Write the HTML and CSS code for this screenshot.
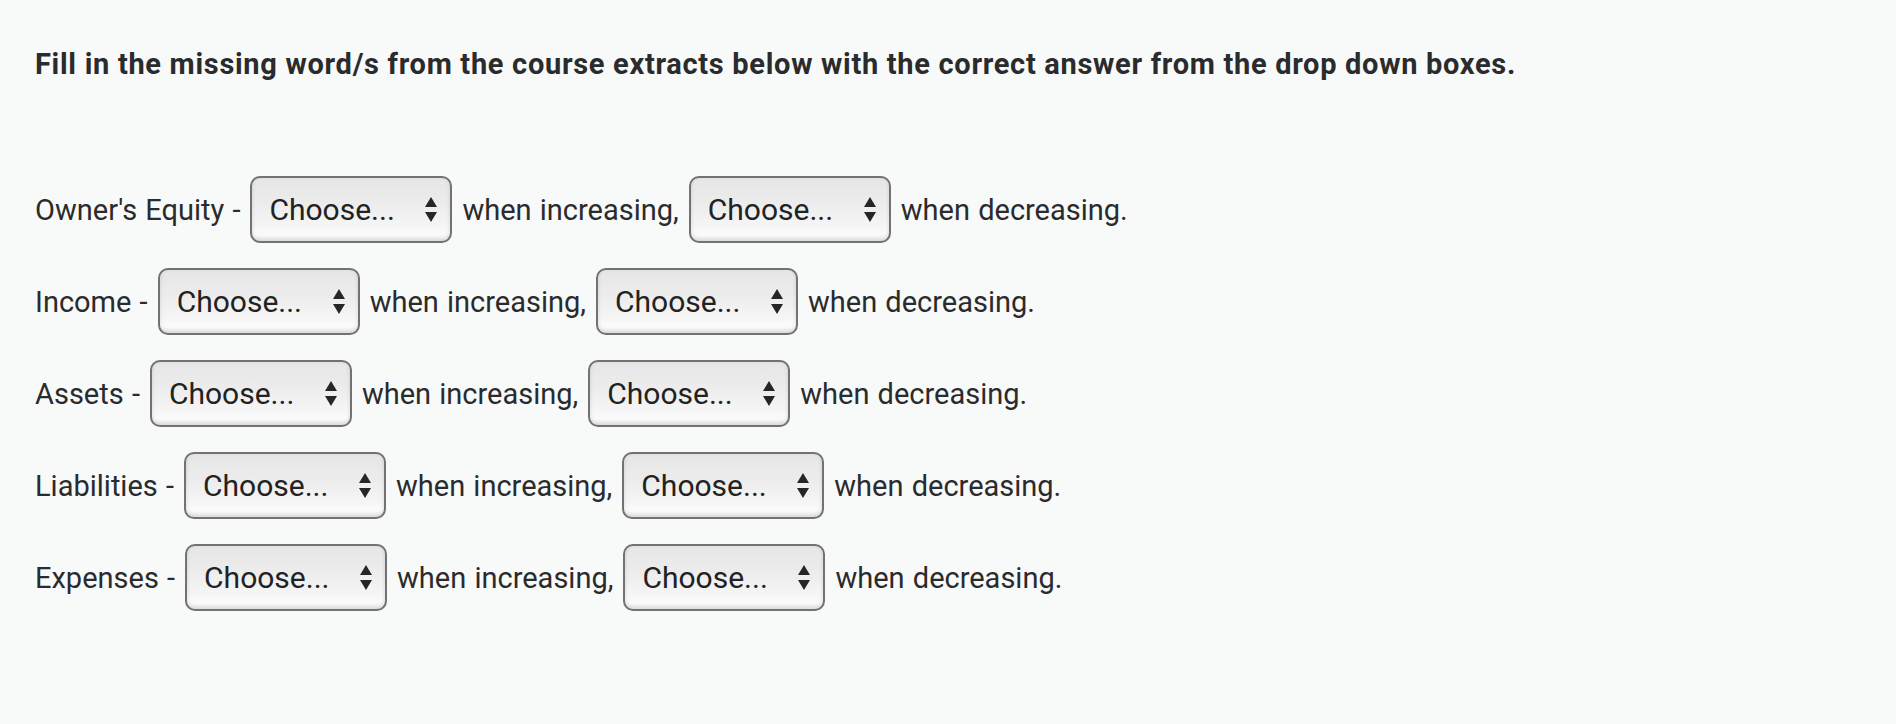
FILE: index.html
```html
<!DOCTYPE html>
<html lang="en">
<head>
<meta charset="utf-8">
<title>Fill in the missing words</title>
<link rel="stylesheet" href="styles.css">
</head>
<body>
<main class="question">
  <p class="prompt">Fill in the missing word/s from the course extracts below with the correct answer from the drop down boxes.</p>
  <div class="rows">
    <div class="row">
      <span class="label">Owner's Equity -</span>
      <div class="select"><span>Choose...</span><svg class="arrows" viewBox="0 0 12 25"><path d="M6 0 L12 10 H0 Z M6 25 L12 15 H0 Z"/></svg></div>
      <span class="label">when increasing,</span>
      <div class="select"><span>Choose...</span><svg class="arrows" viewBox="0 0 12 25"><path d="M6 0 L12 10 H0 Z M6 25 L12 15 H0 Z"/></svg></div>
      <span class="label">when decreasing.</span>
    </div>
    <div class="row">
      <span class="label">Income -</span>
      <div class="select"><span>Choose...</span><svg class="arrows" viewBox="0 0 12 25"><path d="M6 0 L12 10 H0 Z M6 25 L12 15 H0 Z"/></svg></div>
      <span class="label">when increasing,</span>
      <div class="select"><span>Choose...</span><svg class="arrows" viewBox="0 0 12 25"><path d="M6 0 L12 10 H0 Z M6 25 L12 15 H0 Z"/></svg></div>
      <span class="label">when decreasing.</span>
    </div>
    <div class="row">
      <span class="label">Assets -</span>
      <div class="select"><span>Choose...</span><svg class="arrows" viewBox="0 0 12 25"><path d="M6 0 L12 10 H0 Z M6 25 L12 15 H0 Z"/></svg></div>
      <span class="label">when increasing,</span>
      <div class="select"><span>Choose...</span><svg class="arrows" viewBox="0 0 12 25"><path d="M6 0 L12 10 H0 Z M6 25 L12 15 H0 Z"/></svg></div>
      <span class="label">when decreasing.</span>
    </div>
    <div class="row">
      <span class="label">Liabilities -</span>
      <div class="select"><span>Choose...</span><svg class="arrows" viewBox="0 0 12 25"><path d="M6 0 L12 10 H0 Z M6 25 L12 15 H0 Z"/></svg></div>
      <span class="label">when increasing,</span>
      <div class="select"><span>Choose...</span><svg class="arrows" viewBox="0 0 12 25"><path d="M6 0 L12 10 H0 Z M6 25 L12 15 H0 Z"/></svg></div>
      <span class="label">when decreasing.</span>
    </div>
    <div class="row">
      <span class="label">Expenses -</span>
      <div class="select"><span>Choose...</span><svg class="arrows" viewBox="0 0 12 25"><path d="M6 0 L12 10 H0 Z M6 25 L12 15 H0 Z"/></svg></div>
      <span class="label">when increasing,</span>
      <div class="select"><span>Choose...</span><svg class="arrows" viewBox="0 0 12 25"><path d="M6 0 L12 10 H0 Z M6 25 L12 15 H0 Z"/></svg></div>
      <span class="label">when decreasing.</span>
    </div>
  </div>
</main>
</body>
</html>
```

FILE: styles.css
```css
html, body {
  margin: 0;
  padding: 0;
  background: #f8f9f9;
}

body {
  font-family: Roboto, "Liberation Sans", sans-serif;
  color: #2a2b2c;
  font-size: 29px;
}

.question {
  padding: 40px 35px 0 35px;
}

.prompt {
  margin: 0;
  font-weight: 700;
  font-size: 29px;
  letter-spacing: 0.7px;
  line-height: 48px;
}

.rows {
  display: flex;
  flex-direction: column;
  gap: 25px;
  margin-top: 88px;
}

.row {
  display: flex;
  align-items: center;
  gap: 10px;
  height: 67px;
}

.label {
  white-space: nowrap;
  word-spacing: 1px;
}

.select {
  box-sizing: border-box;
  width: 202px;
  height: 67px;
  display: flex;
  align-items: center;
  justify-content: space-between;
  padding: 0 13px 0 17px;
  border: 2px solid #727272;
  border-radius: 10px;
  background: linear-gradient(to bottom, #e6e6e6 0%, #ececec 40%, #f5f5f5 75%, #fbfbfb 90%, #ebebeb 100%);
  box-shadow: inset 0 -3px 4px rgba(0, 0, 0, 0.06), inset 2px 0 3px rgba(0, 0, 0, 0.03), inset -2px 0 3px rgba(0, 0, 0, 0.03);
  color: #222;
  font-size: 30px;
}

.arrows {
  width: 12px;
  height: 25px;
  fill: #262626;
}
```
